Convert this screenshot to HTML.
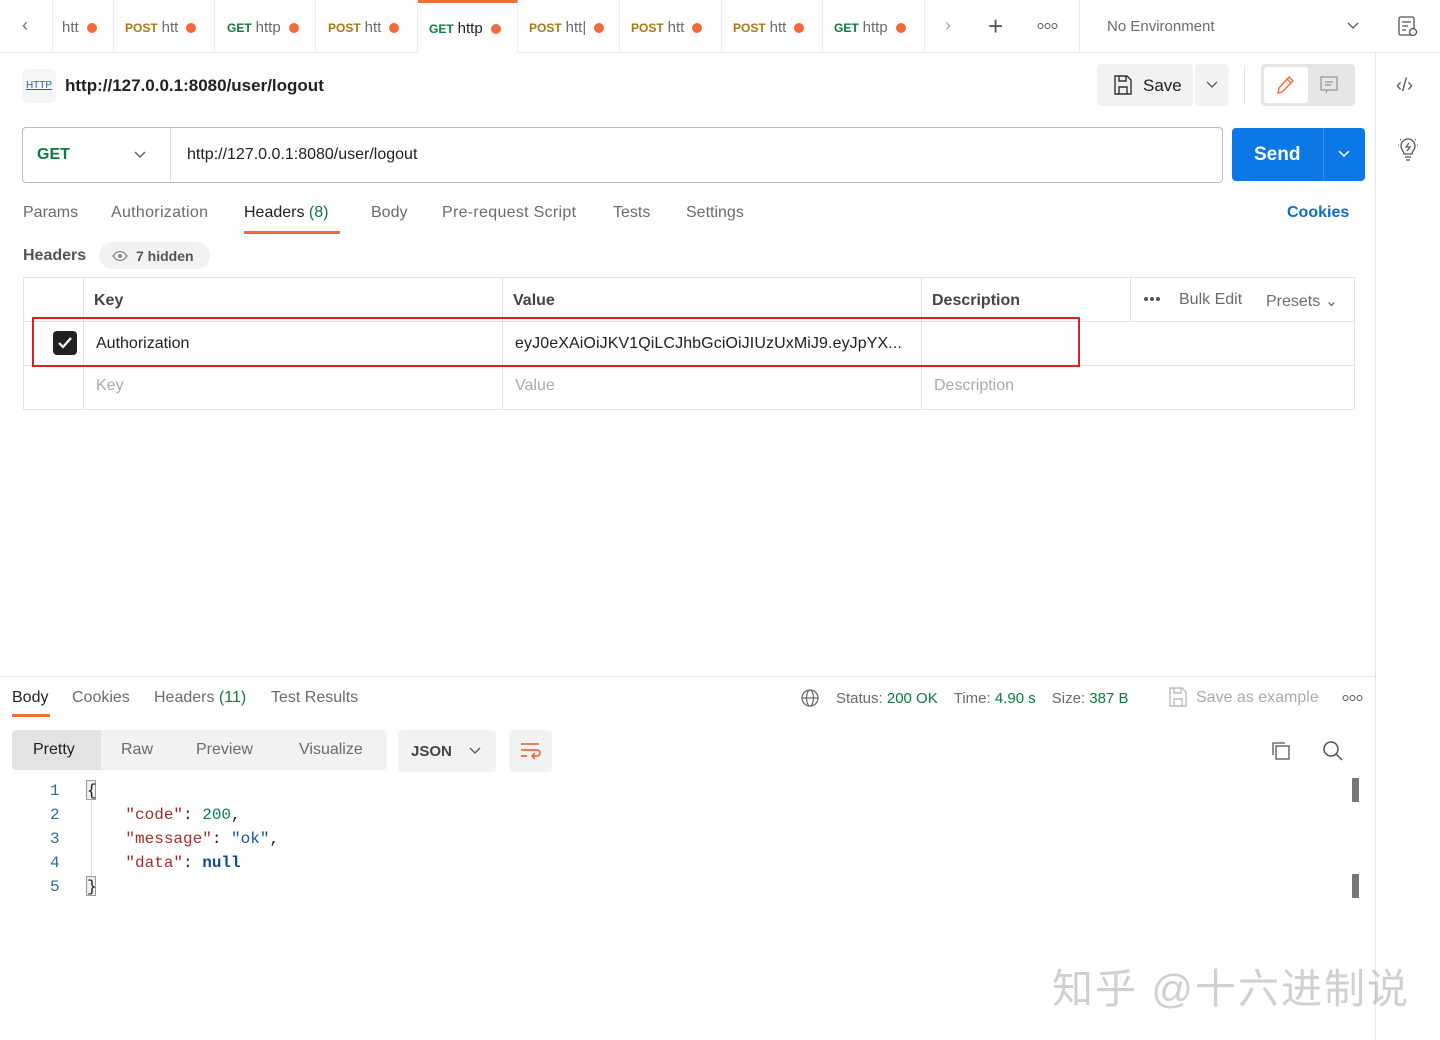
<!DOCTYPE html>
<html><head><meta charset="utf-8"><style>
*{box-sizing:border-box;margin:0;padding:0}
body{width:1440px;height:1040px;background:#fff;font-family:"Liberation Sans",sans-serif;color:#212121;position:relative;overflow:hidden;font-size:15px}
.a{position:absolute}
.dot{display:inline-block;width:10px;height:10px;border-radius:50%;background:#f26b3a;margin-left:8px;vertical-align:middle}
.tab{position:absolute;top:0;height:52px;line-height:56px;font-size:15px;color:#6b6b6b;border-right:1px solid #ececec;white-space:nowrap;overflow:hidden}
.post{color:#a9780f;font-size:12px;font-weight:bold;margin-right:4px}
.get{color:#0b7a3e;font-size:12px;font-weight:bold;margin-right:4px}
.g{color:#6b6b6b}
.mono{font-family:"Liberation Mono",monospace;font-size:16px}
</style></head><body>
<div class="a" style="left:0;top:52px;width:1440px;height:1px;background:#e6e6e6"></div>
<div class="a g" style="left:22px;top:15px;font-size:18px">‹</div>
<div class="tab" style="left:52px;width:62px;padding-left:9px;border-left:1px solid #ececec">htt<span class="dot"></span></div>
<div class="tab" style="left:114px;width:101px;padding-left:11px"><span class="post">POST</span>htt<span class="dot"></span></div>
<div class="tab" style="left:215px;width:101px;padding-left:12px"><span class="get">GET</span>http<span class="dot"></span></div>
<div class="tab" style="left:316px;width:102px;padding-left:12px"><span class="post">POST</span>htt<span class="dot"></span></div>
<div class="tab" style="left:418px;width:100px;padding-left:11px;border-top:3px solid #f26b3a;line-height:52px;height:53px;background:#fff;color:#212121"><span class="get">GET</span>http<span class="dot"></span></div>
<div class="tab" style="left:518px;width:102px;padding-left:11px"><span class="post">POST</span>htt|<span class="dot"></span></div>
<div class="tab" style="left:620px;width:102px;padding-left:11px"><span class="post">POST</span>htt<span class="dot"></span></div>
<div class="tab" style="left:722px;width:101px;padding-left:11px"><span class="post">POST</span>htt<span class="dot"></span></div>
<div class="tab" style="left:823px;width:102px;padding-left:11px"><span class="get">GET</span>http<span class="dot"></span></div>
<div class="a g" style="left:945px;top:15px;font-size:18px;color:#aaa">›</div>
<div class="a" style="left:988px;top:11px;font-size:26px;color:#555;font-weight:300">+</div>
<svg class="a" style="left:1037px;top:22px" width="22" height="8"><circle cx="3.5" cy="4" r="2.5" stroke="#555" fill="none"/><circle cx="10.5" cy="4" r="2.5" stroke="#555" fill="none"/><circle cx="17.5" cy="4" r="2.5" stroke="#555" fill="none"/></svg>
<div class="a" style="left:1079px;top:0;width:1px;height:52px;background:#e6e6e6"></div>
<div class="a g" style="left:1107px;top:18px;font-size:15px">No Environment</div>
<svg class="a" style="left:1346px;top:21px" width="14" height="10"><path d="M2 2l5 5 5-5" stroke="#555" fill="none" stroke-width="1.3"/></svg>
<svg class="a" style="left:1397px;top:15px" width="22" height="24"><rect x="2" y="2" width="15" height="18" rx="1.5" stroke="#555" fill="none" stroke-width="1.3"/><path d="M5 7h9M5 11h6M5 15h4" stroke="#555" stroke-width="1.3"/><circle cx="16" cy="17" r="3.5" stroke="#555" fill="#fff" stroke-width="1.3"/></svg>
<div class="a" style="left:1375px;top:52px;width:1px;height:988px;background:#e6e6e6"></div>
<div class="a" style="left:1396px;top:75px;font-size:18px;color:#555">‹/›</div>
<svg class="a" style="left:1397px;top:136px" width="22" height="26"><path d="M7 18c0-3-3-4-3-8a7 7 0 0 1 14 0c0 4-3 5-3 8z M8 21h6M9 24h4" stroke="#555" fill="none" stroke-width="1.3"/><path d="M12 7l-3 4h4l-3 4" stroke="#555" fill="none" stroke-width="1.2"/><path d="M1 9h1M20 9h1M3 3l1 1M19 3l-1 1" stroke="#555"/></svg>
<div class="a" style="left:22px;top:69px;width:34px;height:34px;border-radius:5px;background:#f5f5f5;color:#0c7488;font-size:10px;text-align:center;line-height:34px;text-decoration:underline">HTTP</div>
<div class="a" style="left:65px;top:76px;font-size:17px;font-weight:bold">http://127.0.0.1:8080/user/logout</div>
<div class="a" style="left:1097px;top:64px;width:96px;height:42px;background:#f2f2f2;border-radius:4px;font-size:17px;line-height:43px;padding-left:46px">Save</div>
<svg class="a" style="left:1113px;top:74px" width="20" height="22"><path d="M2 2h12l4 4v14H2z M6 2v5h7V2 M6 20v-7h8v7" stroke="#333" fill="none" stroke-width="1.4"/></svg>
<div class="a" style="left:1195px;top:64px;width:34px;height:42px;background:#f2f2f2;border-radius:4px"></div>
<svg class="a" style="left:1205px;top:80px" width="14" height="10"><path d="M2 2l5 5 5-5" stroke="#555" fill="none" stroke-width="1.3"/></svg>
<div class="a" style="left:1244px;top:66px;width:1px;height:38px;background:#e6e6e6"></div>
<div class="a" style="left:1261px;top:64px;width:94px;height:42px;background:#e6e6e6;border-radius:4px"></div>
<div class="a" style="left:1264px;top:67px;width:44px;height:36px;background:#fff;border-radius:3px"></div>
<svg class="a" style="left:1275px;top:74px" width="20" height="22"><path d="M3 19l1-5L14 3l4 4L7 18z M12 5l4 4" stroke="#f26b3a" fill="none" stroke-width="1.4"/></svg>
<svg class="a" style="left:1319px;top:75px" width="20" height="20"><rect x="2" y="2" width="16" height="13" stroke="#999" fill="none" stroke-width="1.3"/><path d="M6 7h8M6 10h6M8 15l-1 3" stroke="#999" fill="none" stroke-width="1.3"/></svg>
<div class="a" style="left:22px;top:127px;width:1201px;height:56px;border:1px solid #bdbdbd;border-radius:4px"></div>
<div class="a" style="left:170px;top:128px;width:1px;height:54px;background:#e0e0e0"></div>
<div class="a" style="left:37px;top:146px;font-size:16px;font-weight:bold;color:#0b7a3e">GET</div>
<svg class="a" style="left:133px;top:150px" width="14" height="10"><path d="M2 2l5 5 5-5" stroke="#555" fill="none" stroke-width="1.3"/></svg>
<div class="a" style="left:187px;top:146px;font-size:16px">http://127.0.0.1:8080/user/logout</div>
<div class="a" style="left:1232px;top:128px;width:133px;height:53px;background:#0c78e8;border-radius:4px"></div>
<div class="a" style="left:1323px;top:128px;width:1px;height:53px;background:#3a8fe6"></div>
<div class="a" style="left:1254px;top:144px;font-size:19px;font-weight:bold;color:#fff">Send</div>
<svg class="a" style="left:1337px;top:149px" width="14" height="10"><path d="M2 2l5 5 5-5" stroke="#fff" fill="none" stroke-width="1.5"/></svg>
<div class="a g" style="left:23px;top:204px;font-size:16px">Params</div>
<div class="a g" style="left:111px;top:204px;font-size:16px;letter-spacing:0.3px">Authorization</div>
<div class="a" style="left:244px;top:204px;font-size:16px">Headers <span style="color:#0b7a3e">(8)</span></div>
<div class="a" style="left:244px;top:231px;width:96px;height:3px;background:#f26b3a"></div>
<div class="a g" style="left:371px;top:204px;font-size:16px">Body</div>
<div class="a g" style="left:442px;top:204px;font-size:16px;letter-spacing:0.3px">Pre-request Script</div>
<div class="a g" style="left:613px;top:204px;font-size:16px">Tests</div>
<div class="a g" style="left:686px;top:204px;font-size:16px">Settings</div>
<div class="a" style="left:1287px;top:204px;font-size:16px;font-weight:bold;color:#0c6dd0">Cookies</div>
<div class="a g" style="left:23px;top:247px;font-size:16px;font-weight:bold;color:#555">Headers</div>
<div class="a" style="left:99px;top:242px;width:111px;height:27px;background:#f2f2f2;border-radius:14px;font-size:14px;line-height:28px;padding-left:37px;color:#555;font-weight:bold">7 hidden</div>
<svg class="a" style="left:112px;top:250px" width="16" height="12"><path d="M1 6c4-6 10-6 14 0c-4 6-10 6-14 0z" stroke="#888" fill="none" stroke-width="1.3"/><circle cx="8" cy="6" r="2" fill="#888"/></svg>
<div class="a" style="left:23px;top:277px;width:1332px;height:133px;border:1px solid #e3e3e3"></div>
<div class="a" style="left:23px;top:321px;width:1332px;height:1px;background:#e3e3e3"></div>
<div class="a" style="left:23px;top:365px;width:1332px;height:1px;background:#e3e3e3"></div>
<div class="a" style="left:83px;top:277px;width:1px;height:133px;background:#e3e3e3"></div>
<div class="a" style="left:502px;top:277px;width:1px;height:133px;background:#e3e3e3"></div>
<div class="a" style="left:921px;top:277px;width:1px;height:133px;background:#e3e3e3"></div>
<div class="a" style="left:1130px;top:277px;width:1px;height:44px;background:#e3e3e3"></div>
<div class="a" style="left:94px;top:292px;font-size:16px;font-weight:bold;color:#444">Key</div>
<div class="a" style="left:513px;top:292px;font-size:16px;font-weight:bold;color:#444">Value</div>
<div class="a" style="left:932px;top:292px;font-size:16px;font-weight:bold;color:#444">Description</div>
<svg class="a" style="left:1143px;top:296px" width="18" height="6"><circle cx="3" cy="3" r="2" fill="#555"/><circle cx="9" cy="3" r="2" fill="#555"/><circle cx="15" cy="3" r="2" fill="#555"/></svg>
<div class="a g" style="left:1179px;top:291px;font-size:16px">Bulk Edit</div>
<div class="a g" style="left:1266px;top:291px;font-size:16px">Presets ⌄</div>
<div class="a" style="left:53px;top:331px;width:24px;height:24px;background:#212121;border-radius:4px"></div>
<svg class="a" style="left:56px;top:334px" width="18" height="18"><path d="M3 9l4 4 8-9" stroke="#fff" fill="none" stroke-width="2.2"/></svg>
<div class="a" style="left:96px;top:335px;font-size:16px">Authorization</div>
<div class="a" style="left:515px;top:335px;font-size:16px;letter-spacing:0.1px">eyJ0eXAiOiJKV1QiLCJhbGciOiJIUzUxMiJ9.eyJpYX...</div>
<div class="a" style="left:96px;top:377px;font-size:16px;color:#aaa">Key</div>
<div class="a" style="left:515px;top:377px;font-size:16px;color:#aaa">Value</div>
<div class="a" style="left:934px;top:377px;font-size:16px;color:#aaa">Description</div>
<div class="a" style="left:32px;top:317px;width:1048px;height:50px;border:2px solid #e02020"></div>
<div class="a" style="left:0;top:676px;width:1375px;height:1px;background:#e6e6e6"></div>
<div class="a" style="left:12px;top:689px;font-size:16px">Body</div>
<div class="a" style="left:12px;top:714px;width:38px;height:3px;background:#f26b3a"></div>
<div class="a g" style="left:72px;top:689px;font-size:16px">Cookies</div>
<div class="a g" style="left:154px;top:689px;font-size:16px">Headers <span style="color:#0b7a3e">(11)</span></div>
<div class="a g" style="left:271px;top:689px;font-size:16px">Test Results</div>
<svg class="a" style="left:800px;top:688px" width="20" height="20"><circle cx="10" cy="10" r="8" stroke="#666" fill="none" stroke-width="1.3"/><ellipse cx="10" cy="10" rx="3.5" ry="8" stroke="#666" fill="none" stroke-width="1.2"/><path d="M2 10h16" stroke="#666" stroke-width="1.2"/></svg>
<div class="a g" style="left:836px;top:690px;font-size:15px;white-space:nowrap">Status: <span style="color:#0b7a3e">200 OK</span><span style="display:inline-block;width:16px"></span>Time: <span style="color:#0b7a3e">4.90 s</span><span style="display:inline-block;width:16px"></span>Size: <span style="color:#0b7a3e">387 B</span></div>
<svg class="a" style="left:1168px;top:686px" width="20" height="22"><path d="M2 2h12l4 4v14H2z M6 2v5h7V2 M6 20v-7h8v7" stroke="#bbb" fill="none" stroke-width="1.4"/></svg>
<div class="a" style="left:1196px;top:689px;font-size:16px;color:#aaa">Save as example</div>
<svg class="a" style="left:1342px;top:694px" width="22" height="8"><circle cx="3.5" cy="4" r="2.5" stroke="#555" fill="none"/><circle cx="10.5" cy="4" r="2.5" stroke="#555" fill="none"/><circle cx="17.5" cy="4" r="2.5" stroke="#555" fill="none"/></svg>
<div class="a" style="left:12px;top:730px;width:375px;height:40px;background:#f2f2f2;border-radius:4px"></div>
<div class="a" style="left:12px;top:730px;width:89px;height:40px;background:#e3e3e3;border-radius:4px 0 0 4px"></div>
<div class="a" style="left:33px;top:741px;font-size:16px">Pretty</div>
<div class="a g" style="left:121px;top:741px;font-size:16px">Raw</div>
<div class="a g" style="left:196px;top:741px;font-size:16px">Preview</div>
<div class="a g" style="left:299px;top:741px;font-size:16px">Visualize</div>
<div class="a" style="left:398px;top:730px;width:98px;height:42px;background:#f2f2f2;border-radius:4px;font-size:15px;font-weight:bold;color:#444;line-height:43px;padding-left:13px">JSON</div>
<svg class="a" style="left:468px;top:746px" width="14" height="10"><path d="M2 2l5 5 5-5" stroke="#555" fill="none" stroke-width="1.3"/></svg>
<div class="a" style="left:509px;top:730px;width:43px;height:42px;background:#f2f2f2;border-radius:4px"></div>
<svg class="a" style="left:520px;top:741px" width="22" height="20"><path d="M1 3h18M1 9h16a3 3 0 0 1 0 6h-5M15 12l-3 3 3 3M1 15h6" stroke="#e05a30" fill="none" stroke-width="1.4"/></svg>
<svg class="a" style="left:1270px;top:740px" width="22" height="22"><rect x="6" y="6" width="13" height="13" stroke="#555" fill="none" stroke-width="1.3"/><path d="M3 15V3h12" stroke="#555" fill="none" stroke-width="1.3"/></svg>
<svg class="a" style="left:1322px;top:740px" width="22" height="22"><circle cx="9" cy="9" r="7" stroke="#555" fill="none" stroke-width="1.5"/><path d="M14 14l6 6" stroke="#555" stroke-width="1.5"/></svg>
<div class="a mono" style="left:50px;top:779px;line-height:24px;color:#2a6e8c;text-align:right">1<br>2<br>3<br>4<br>5</div>
<div class="a" style="left:86px;top:780px;width:10px;height:20px;border:1px solid #999;background:#eee"></div>
<div class="a" style="left:86px;top:876px;width:10px;height:20px;border:1px solid #999;background:#eee"></div>
<div class="a" style="left:91px;top:800px;width:1px;height:76px;background:#ddd"></div>
<div class="a mono" style="left:87px;top:779px;line-height:24px;white-space:pre">{
    <span style="color:#a0302c">"code"</span>: <span style="color:#0b7a5a">200</span>,
    <span style="color:#a0302c">"message"</span>: <span style="color:#1a4f9c">"ok"</span>,
    <span style="color:#a0302c">"data"</span>: <b style="color:#0c4a9c">null</b>
}</div>
<div class="a" style="left:1352px;top:778px;width:7px;height:24px;background:#777"></div>
<div class="a" style="left:1352px;top:874px;width:7px;height:24px;background:#777"></div>
<div class="a" style="left:1052px;top:955px;font-size:41px;letter-spacing:2px;color:rgba(150,150,150,0.45);font-family:'Liberation Sans','Noto Sans CJK SC',sans-serif;white-space:nowrap">知乎 @十六进制说</div>
</body></html>
